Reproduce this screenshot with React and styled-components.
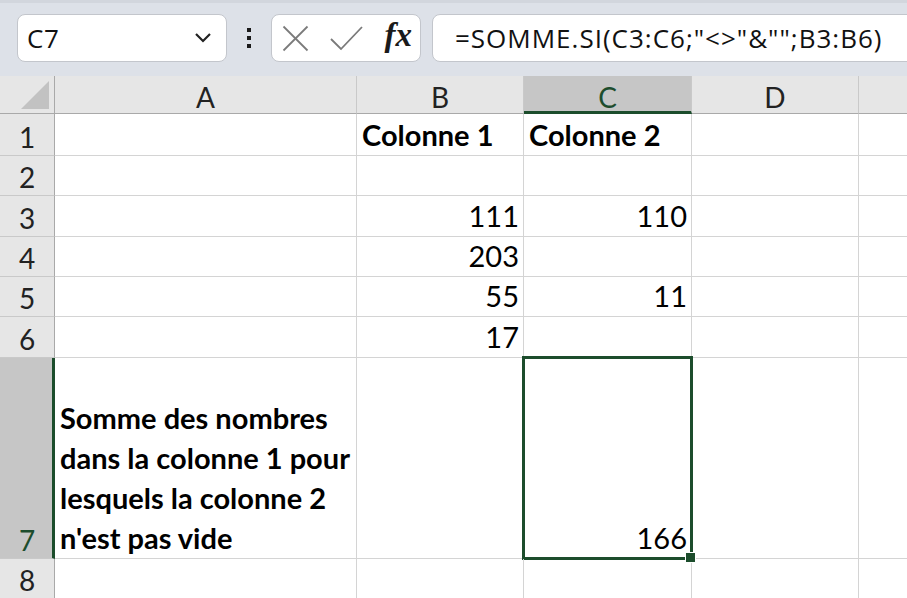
import React from "react";
import styled, { createGlobalStyle } from "styled-components";

// Global
const GlobalStyle = createGlobalStyle`
	html, body {
		margin: 0;
		padding: 0;
		background: #ffffff;
		overflow: hidden;
	}
	* { box-sizing: border-box; }
`;

// Data
const columns = [
	{ key: "A", width: 302 },
	{ key: "B", width: 167 },
	{ key: "C", width: 168 },
	{ key: "D", width: 167 },
	{ key: "E", width: 60 },
];

const rows = [
	{ n: 1, h: 42, cells: { B: { text: "Colonne 1", bold: true }, C: { text: "Colonne 2", bold: true } } },
	{ n: 2, h: 40, cells: {} },
	{ n: 3, h: 41, cells: { B: { text: "111", num: true }, C: { text: "110", num: true } } },
	{ n: 4, h: 40, cells: { B: { text: "203", num: true } } },
	{ n: 5, h: 40, cells: { B: { text: "55", num: true }, C: { text: "11", num: true } } },
	{ n: 6, h: 41, cells: { B: { text: "17", num: true } } },
	{
		n: 7, h: 201, cells: {
			A: { text: "Somme des nombres dans la colonne 1 pour lesquels la colonne 2 n'est pas vide", bold: true, wrap: true },
			C: { text: "166", num: true, selected: true },
		}
	},
	{ n: 8, h: 40, cells: {} },
];

const activeCol = "C";
const activeRow = 7;

// Component
const App = () => {
	return (
		<React.Fragment>
			<GlobalStyle />
			<Page>
				<Toolbar>
					<NameBox>
						<span>C7</span>
						<svg width="18" height="12" viewBox="0 0 18 12">
							<polyline points="2,2 9,9 16,2" fill="none" stroke="#222" strokeWidth="2.2" />
						</svg>
					</NameBox>
					<Grip>
						<i /><i /><i />
					</Grip>
					<ActionGroup>
						<svg width="27" height="27" viewBox="0 0 27 27">
							<line x1="1.5" y1="1.5" x2="25.5" y2="25.5" stroke="#7a7a7a" strokeWidth="1.8" />
							<line x1="25.5" y1="1.5" x2="1.5" y2="25.5" stroke="#7a7a7a" strokeWidth="1.8" />
						</svg>
						<svg width="33" height="26" viewBox="0 0 33 26">
							<polyline points="1,14 11,24 32,2" fill="none" stroke="#7a7a7a" strokeWidth="1.8" />
						</svg>
						<Fx>fx</Fx>
					</ActionGroup>
					<FormulaBox>=SOMME.SI(C3:C6;"&lt;&gt;"&amp;"";B3:B6)</FormulaBox>
				</Toolbar>
				<Sheet $cols={ columns.map((c) => c.width) } $rows={ rows.map((r) => r.h) }>
					<Corner>
						<svg width="29" height="28" viewBox="0 0 29 28">
							<polygon points="28,0 28,28 0,28" fill="#c2c2c2" />
						</svg>
					</Corner>
					{
						columns.map((c) => (
							<ColHeader key={ c.key } $active={ c.key === activeCol }>{ c.key === "E" ? "" : c.key }</ColHeader>
						))
					}
					{
						rows.map((r) => (
							<React.Fragment key={ r.n }>
								<RowHeader $active={ r.n === activeRow }>{ r.n }</RowHeader>
								{
									columns.map((c) => {
										const cell = r.cells[c.key] || {};
										return (
											<Cell
												key={ c.key }
												$bold={ cell.bold }
												$num={ cell.num }
												$wrap={ cell.wrap }
												$selected={ cell.selected }
											>
												{ cell.text }
											</Cell>
										);
									})
								}
							</React.Fragment>
						))
					}
				</Sheet>
			</Page>
		</React.Fragment>
	);
};

// Styled
const Page = styled.div`
	width: 907px;
	height: 598px;
	overflow: hidden;
	display: flex;
	flex-direction: column;
	font-family: Lato, "Open Sans", sans-serif;
`;

const Toolbar = styled.div`
	height: 76px;
	flex-shrink: 0;
	background: #dde1e8;
	border-top: 3px solid #d2d6dd;
	display: flex;
	align-items: center;
	padding: 0 0 3px 17px;
`;

const NameBox = styled.div`
	width: 210px;
	height: 48px;
	background: #ffffff;
	border: 1px solid #c3c6cc;
	border-radius: 8px;
	display: flex;
	align-items: center;
	justify-content: space-between;
	padding: 0 14px 0 9px;
	font-family: "Open Sans", sans-serif;
	font-size: 26px;
	letter-spacing: 0.5px;
	color: #111;
`;

const Grip = styled.div`
	width: 44px;
	display: flex;
	flex-direction: column;
	align-items: center;
	gap: 4px;
	i {
		width: 4px;
		height: 4px;
		background: #1a1a1a;
	}
`;

const ActionGroup = styled.div`
	width: 150px;
	height: 48px;
	background: #ffffff;
	border: 1px solid #c3c6cc;
	border-radius: 8px;
	display: flex;
	align-items: center;
	justify-content: space-between;
	padding: 0 8px 0 10px;
`;

const Fx = styled.span`
	font-family: "Liberation Serif", serif;
	font-style: italic;
	font-weight: bold;
	font-size: 33px;
	color: #1a1a1a;
	margin-top: -5px;
`;

const FormulaBox = styled.div`
	flex: 1;
	height: 48px;
	margin-left: 11px;
	margin-right: -20px;
	background: #ffffff;
	border: 1px solid #c3c6cc;
	border-radius: 8px;
	display: flex;
	align-items: center;
	padding-left: 22px;
	font-family: "Open Sans", sans-serif;
	font-size: 26px;
	letter-spacing: 1px;
	color: #111;
	white-space: nowrap;
`;

const Sheet = styled.div`
	display: grid;
	grid-template-columns: 55px ${ (p) => p.$cols.map((w) => `${ w }px`).join(" ") };
	grid-template-rows: 38px ${ (p) => p.$rows.map((h) => `${ h }px`).join(" ") };
`;

const HeaderBase = styled.div`
	background: #e6e6e6;
	font-family: Lato, "Open Sans", sans-serif;
	font-size: 28px;
	color: #222;
	display: flex;
	align-items: center;
	justify-content: center;
`;

const Corner = styled(HeaderBase)`
	border-right: 1px solid #a9a9a9;
	border-bottom: 1px solid #a9a9a9;
	align-items: flex-end;
	justify-content: flex-end;
	padding: 0 4px 4px 0;
`;

const ColHeader = styled(HeaderBase)`
	border-right: 1px solid #c9c9c9;
	border-bottom: ${ (p) => (p.$active ? "3px solid #1c4d2c" : "1px solid #a9a9a9") };
	background: ${ (p) => (p.$active ? "#c6c6c6" : "#e6e6e6") };
	color: ${ (p) => (p.$active ? "#1d4d2d" : "#222") };
	padding-top: ${ (p) => (p.$active ? "6px" : "4px") };
`;

const RowHeader = styled(HeaderBase)`
	border-bottom: 1px solid #c9c9c9;
	border-right: ${ (p) => (p.$active ? "3px solid #1c4d2c" : "1px solid #a9a9a9") };
	background: ${ (p) => (p.$active ? "#c6c6c6" : "#e6e6e6") };
	color: ${ (p) => (p.$active ? "#1d4d2d" : "#222") };
	align-items: flex-end;
	padding-bottom: 1px;
	padding-left: ${ (p) => (p.$active ? "2px" : "0") };
`;

const Cell = styled.div`
	position: relative;
	border-right: 1px solid #d4d4d4;
	border-bottom: 1px solid #d4d4d4;
	display: flex;
	align-items: flex-end;
	justify-content: ${ (p) => (p.$num ? "flex-end" : "flex-start") };
	padding: 0 4px 0 5px;
	font-family: Lato, "Open Sans", sans-serif;
	font-size: 29px;
	font-weight: ${ (p) => (p.$bold ? 700 : 400) };
	line-height: 40px;
	color: #000;
	white-space: ${ (p) => (p.$wrap ? "normal" : "nowrap") };
	${ (p) => p.$selected && `
		&::after {
			content: "";
			position: absolute;
			left: -2px;
			top: -2px;
			right: -2px;
			bottom: -2px;
			border: 3px solid #1c4d2c;
			pointer-events: none;
		}
		&::before {
			content: "";
			position: absolute;
			right: -5px;
			bottom: -5px;
			width: 9px;
			height: 9px;
			background: #1c4d2c;
			border: 1px solid #ffffff;
			z-index: 1;
		}
	` }
`;

// Export
export default App;
